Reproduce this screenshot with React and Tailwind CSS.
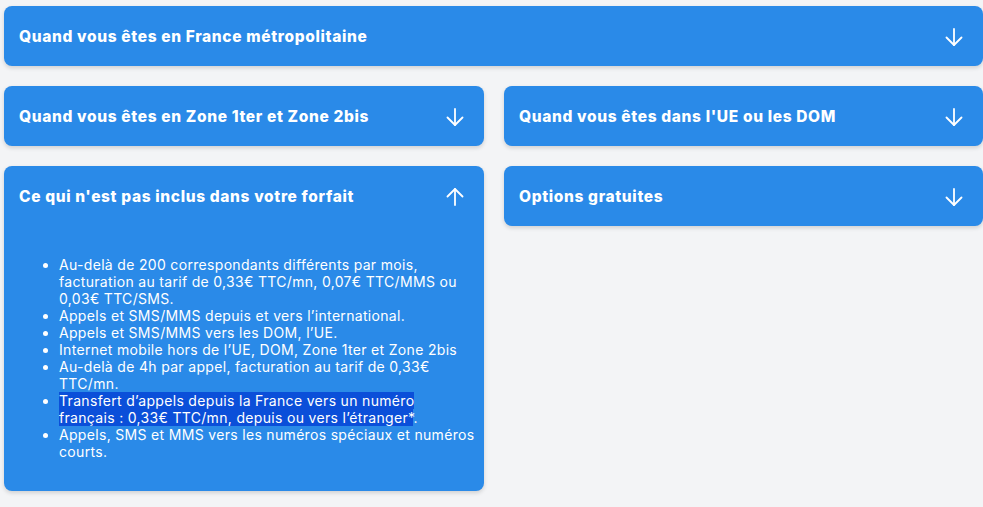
import React from "react";

const font = { fontFamily: "Inter, 'Noto Sans', sans-serif" };

function Arrow({ up }) {
  return (
    <svg width="18" height="18" viewBox="0 0 18 18" fill="none" stroke="white" strokeWidth="1.8" strokeLinecap="round" strokeLinejoin="round" className="shrink-0">
      {up ? (
        <>
          <line x1="9" y1="1" x2="9" y2="17" />
          <polyline points="1.5,8.5 9,1 16.5,8.5" />
        </>
      ) : (
        <>
          <line x1="9" y1="1" x2="9" y2="17" />
          <polyline points="1.5,9.5 9,17 16.5,9.5" />
        </>
      )}
    </svg>
  );
}

function Header({ title, up }) {
  return (
    <div className="flex h-[60px] items-center justify-between pl-[15px] pr-[20px] pt-[1px]">
      <span className="text-[15.5px] font-extrabold tracking-[0.65px] text-white">{title}</span>
      <Arrow up={up} />
    </div>
  );
}

function Card({ title, up, children }) {
  return (
    <div className="rounded-lg bg-[#2a8ae8] shadow-[0_2px_4px_rgba(0,0,0,0.15)]">
      <Header title={title} up={up} />
      {children}
    </div>
  );
}

export default function App() {
  return (
    <div className="min-h-[507px] bg-[#f3f4f6] pl-[4px] pt-[6px]" style={font}>
      <div className="flex flex-col gap-5">
        <Card title="Quand vous êtes en France métropolitaine" />
        <div className="grid grid-cols-[480px_479px] gap-x-5 items-start">
          <div className="flex flex-col gap-5">
            <Card title="Quand vous êtes en Zone 1ter et Zone 2bis" />
            <Card title="Ce qui n'est pas inclus dans votre forfait" up>
              <div className="px-[15px] pt-[30px] pb-[31px]">
                <ul className="list-disc pl-10 text-[14px] leading-[17px] tracking-[0.32px] whitespace-nowrap text-white marker:text-white">
                  <li>Au-delà de 200 correspondants différents par mois,<br />facturation au tarif de 0,33€ TTC/mn, 0,07€ TTC/MMS ou<br />0,03€ TTC/SMS.</li>
                  <li>Appels et SMS/MMS depuis et vers l’international.</li>
                  <li>Appels et SMS/MMS vers les DOM, l’UE.</li>
                  <li>Internet mobile hors de l’UE, DOM, Zone 1ter et Zone 2bis</li>
                  <li>Au-delà de 4h par appel, facturation au tarif de 0,33€<br />TTC/mn.</li>
                  <li><span className="bg-[#0b4fd9]">Transfert d’appels depuis la France vers un numéro </span><br /><span className="bg-[#0b4fd9]">français : 0,33€ TTC/mn, depuis ou vers l’étranger*</span>.</li>
                  <li>Appels, SMS et MMS vers les numéros spéciaux et numéros<br />courts.</li>
                </ul>
              </div>
            </Card>
          </div>
          <div className="flex flex-col gap-5">
            <Card title="Quand vous êtes dans l'UE ou les DOM" />
            <Card title="Options gratuites" />
          </div>
        </div>
      </div>
    </div>
  );
}
